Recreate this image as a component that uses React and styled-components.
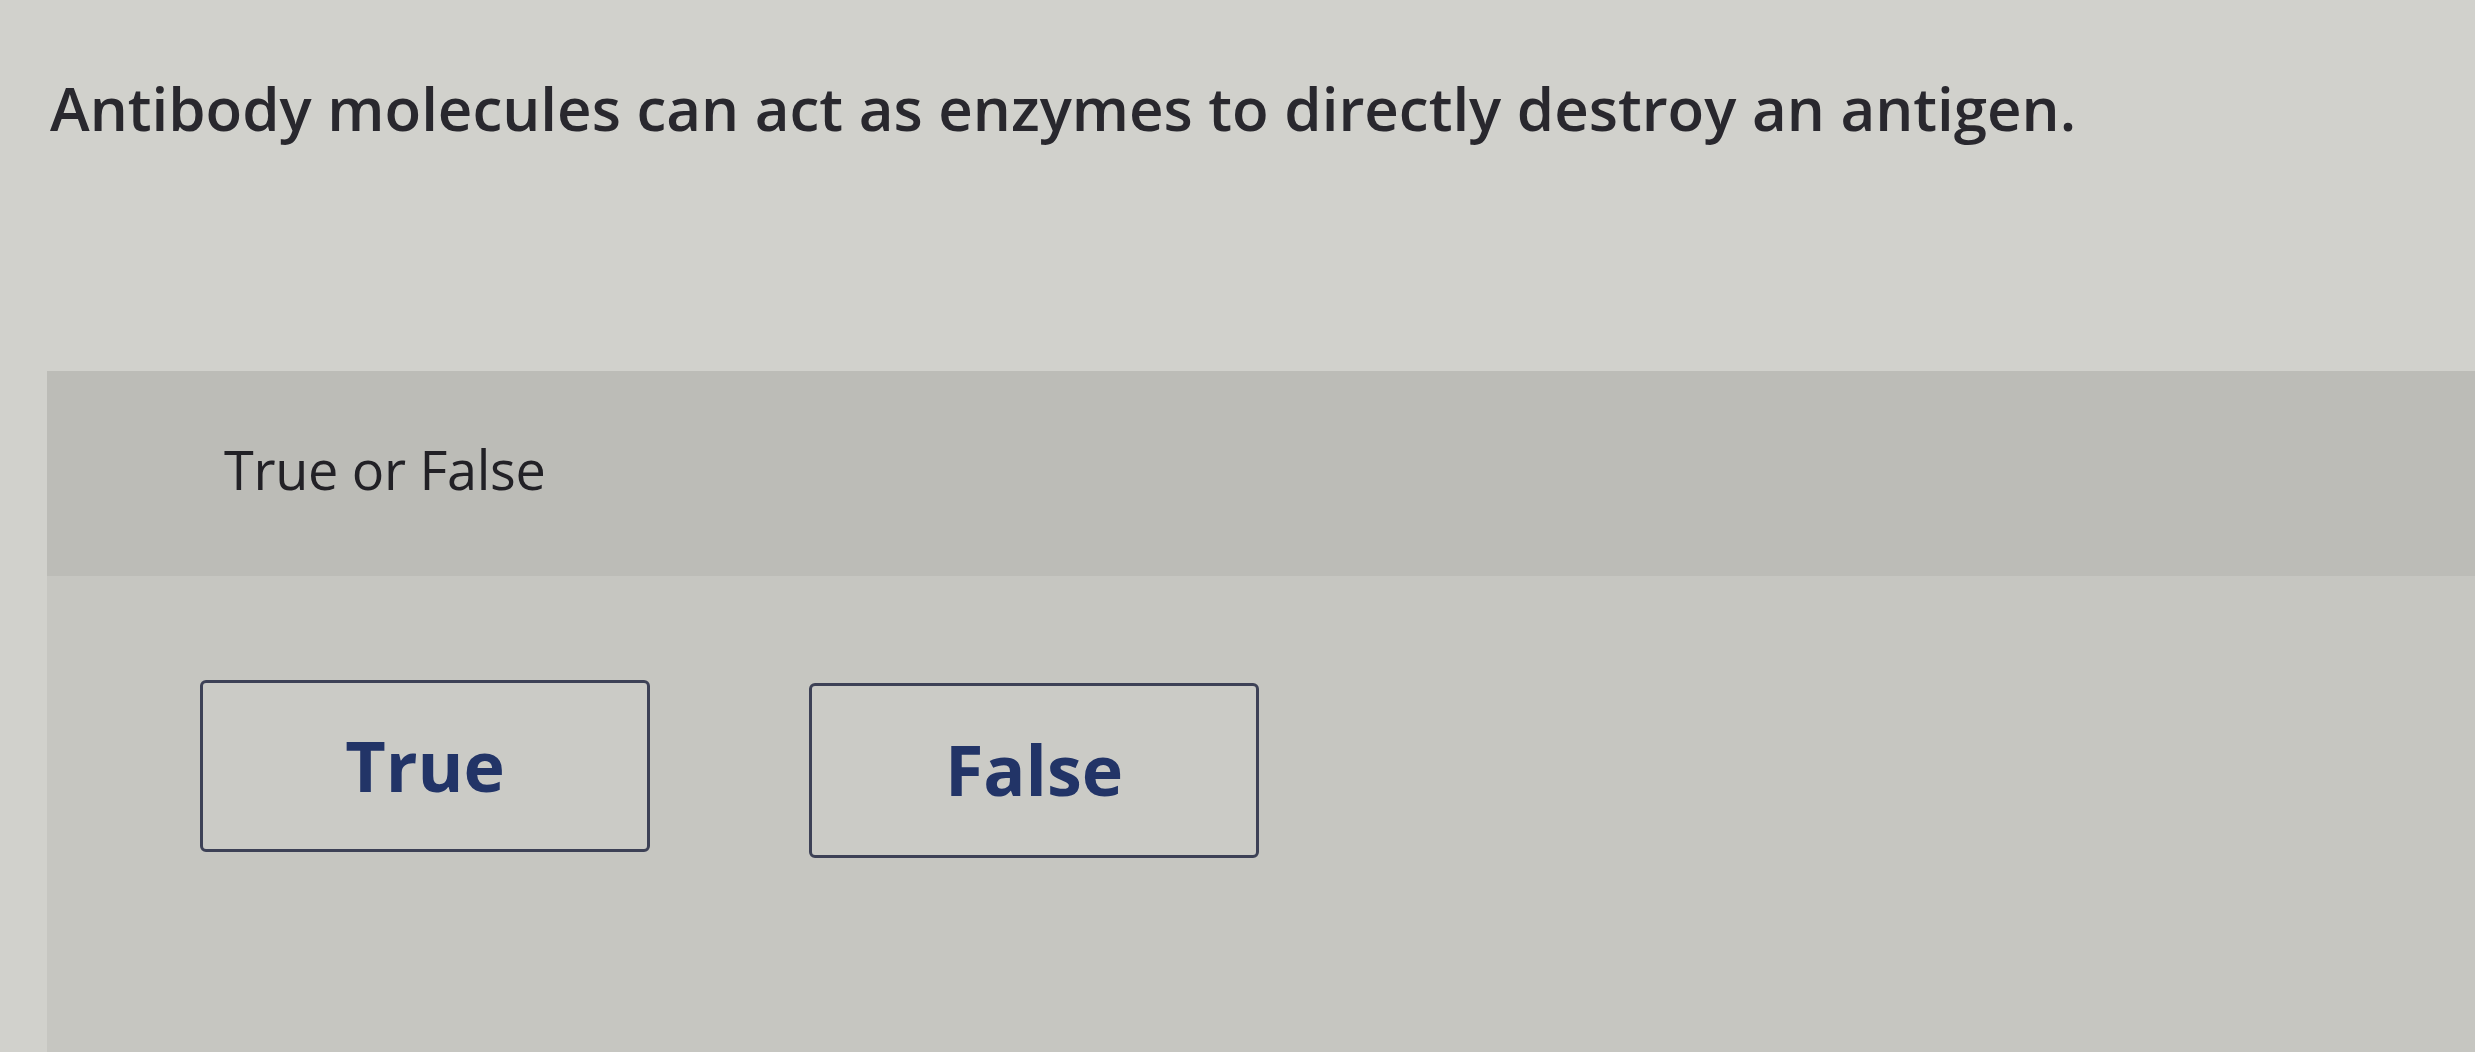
import React from 'react';
import styled, {createGlobalStyle} from 'styled-components';

const GlobalStyle = createGlobalStyle`
  html, body {
    margin: 0;
    padding: 0;
    height: 100%;
    background: #d1d1cc;
  }
  #root {
    height: 100%;
  }
`

const Page = styled.div`
  display: flex;
  flex-direction: column;
  height: 1052px;
  overflow: hidden;
  background: #d1d1cc;
  font-family: "Open Sans", "Liberation Sans", sans-serif;
`

const Prompt = styled.h1`
  margin: 0;
  padding: 67px 0 0 50px;
  height: 371px;
  box-sizing: border-box;
  font-size: 60px;
  font-weight: 600;
  color: #29282e;
`

const Panel = styled.section`
  flex: 1;
  display: flex;
  flex-direction: column;
  margin-left: 47px;
  background: #c6c6c1;
`

const Band = styled.div`
  height: 205px;
  display: flex;
  align-items: center;
  padding-left: 177px;
  padding-bottom: 10px;
  box-sizing: border-box;
  background: #bcbcb7;
  font-size: 54px;
  font-weight: 500;
  letter-spacing: -0.3px;
  color: #222126;
`

const Choices = styled.div`
  display: flex;
  gap: 159px;
  padding: 104px 0 0 153px;
`

const Choice = styled.button`
  width: 450px;
  height: ${p => p.tall ? 175 : 172}px;
  margin-top: ${p => p.drop}px;
  box-sizing: border-box;
  border: 3px solid #3d4156;
  border-radius: 6px;
  background: #cbcbc6;
  color: #223467;
  font-family: inherit;
  font-size: 70px;
  font-weight: 700;
  padding-bottom: 4px;
  cursor: pointer;
`

export default function App () {
  return (
    <Page>
      <GlobalStyle />
      <Prompt>Antibody molecules can act as enzymes to directly destroy an antigen.</Prompt>
      <Panel>
        <Band>True or False</Band>
        <Choices>
          <Choice drop={0}>True</Choice>
          <Choice drop={3} tall>False</Choice>
        </Choices>
      </Panel>
    </Page>
  );
}
